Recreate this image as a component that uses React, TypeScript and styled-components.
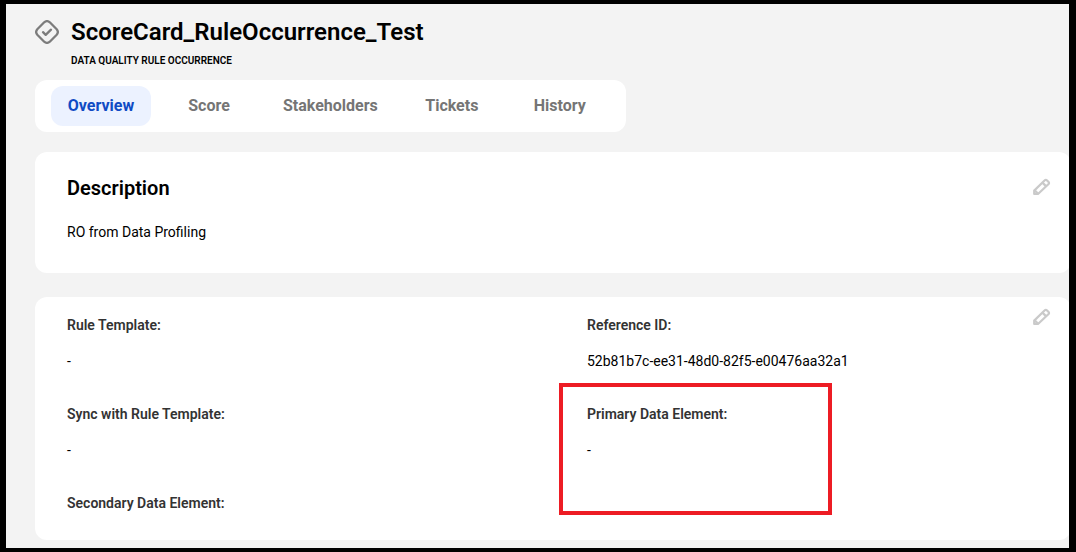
import React from "react";
import styled, { createGlobalStyle } from "styled-components";

const GlobalStyle = createGlobalStyle`
  *, *::before, *::after { box-sizing: border-box; }
  body {
    margin: 0;
    background: #000;
    font-family: Roboto, "Liberation Sans", sans-serif;
    color: #000;
  }
`;

const Page = styled.div`
  min-height: 100vh;
  border: solid #000;
  border-width: 4px 7px 4px 6px;
  padding: 14px 0 8px 29px;
  background: #f3f3f3;
  overflow: hidden;
`;

const Header = styled.header`
  display: flex;
  gap: 12px;
  margin-bottom: 13px;
`;

const AssetIcon = styled.svg`
  flex: none;
  width: 24px;
  height: 24px;
  margin-top: 2px;
`;

const Title = styled.h1`
  margin: 0 0 9px;
  font-size: 24px;
  font-weight: 600;
  line-height: 28px;
`;

const Subtitle = styled.p`
  margin: 0;
  font-size: 10px;
  font-weight: 600;
  line-height: 12px;
  text-transform: uppercase;
`;

const Tabs = styled.nav`
  display: flex;
  gap: 8px;
  width: fit-content;
  margin-bottom: 20px;
  padding: 6px 16px;
  border-radius: 12px;
  background: #fff;
`;

const Tab = styled.button<{ $active?: boolean }>`
  min-width: 100px;
  height: 40px;
  padding: 0 16px;
  border: 0;
  border-radius: 12px;
  background: ${(p) => (p.$active ? "#ecf2ff" : "transparent")};
  color: ${(p) => (p.$active ? "#0f4bc4" : "#757575")};
  font: 700 16px/20px Roboto, "Liberation Sans", sans-serif;
  cursor: pointer;
`;

const Card = styled.section`
  display: flex;
  align-items: flex-start;
  margin: 0 -2px 24px 0;
  border-radius: 12px;
  background: #fff;
  padding-left: 32px;

  &:last-child {
    margin-bottom: 0;
  }
`;

const DescriptionBody = styled.div`
  flex: 1;
  padding: 24px 0 31px;
`;

const Heading = styled.h2`
  margin: 0 0 22px;
  font-size: 20px;
  font-weight: 600;
  line-height: 24px;
`;

const Text = styled.p`
  margin: 0;
  font-size: 14px;
  line-height: 20px;
`;

const Fields = styled.dl`
  flex: 1;
  display: grid;
  grid-template-columns: 1fr 1fr;
  row-gap: 33px;
  margin: 0 -36px 0 0;
  padding: 18px 0 27px;
`;

const Field = styled.div`
  position: relative;
`;

const Label = styled.dt`
  font-size: 14px;
  font-weight: 600;
  line-height: 20px;
  color: #333;
`;

const Value = styled.dd`
  margin: 16px 0 0;
  font-size: 14px;
  line-height: 20px;
`;

const Highlight = styled.span`
  position: absolute;
  top: -21px;
  left: -28px;
  width: 273px;
  height: 132px;
  border: 4px solid #ed1c24;
  pointer-events: none;
`;

const EditButton = styled.button<{ $top: number }>`
  flex: none;
  display: flex;
  width: 18px;
  height: 18px;
  margin: ${(p) => p.$top}px 20px 0 -38px;
  padding: 0;
  border: 0;
  background: transparent;
  cursor: pointer;
  z-index: 1;
`;

const PencilIcon = () => (
  <svg width="18" height="18" viewBox="0 0 18 18" fill="none" stroke="#cacaca" strokeWidth="2.2" strokeLinejoin="round" aria-hidden="true">
    <path d="M1.2 16V12.6L11.8 2.2a1.4 1.4 0 0 1 2 0l1.8 1.8a1.4 1.4 0 0 1 0 2L5 16z" />
    <path d="M9.4 4.6l3.8 3.8M1.7 12.4l3.4 3.4" />
  </svg>
);

const tabs = ["Overview", "Score", "Stakeholders", "Tickets", "History"];

const fields: { label: string; value?: string; highlighted?: boolean }[] = [
  { label: "Rule Template:", value: "-" },
  { label: "Reference ID:", value: "52b81b7c-ee31-48d0-82f5-e00476aa32a1" },
  { label: "Sync with Rule Template:", value: "-" },
  { label: "Primary Data Element:", value: "-", highlighted: true },
  { label: "Secondary Data Element:" },
];

export default function App() {
  const [active, setActive] = React.useState("Overview");
  return (
    <>
      <GlobalStyle />
      <Page>
        <Header>
          <AssetIcon viewBox="0 0 24 24" fill="none" stroke="#7c7c7c" strokeWidth="2.3" strokeLinecap="round" strokeLinejoin="round" aria-hidden="true">
            <path d="M9.2 2.3Q12 0 14.8 2.3L21.7 9.2Q24 12 21.7 14.8L14.8 21.7Q12 24 9.2 21.7L2.3 14.8Q0 12 2.3 9.2Z" />
            <path d="M8 12.2l2.7 2.6L16 9.7" />
          </AssetIcon>
          <div>
            <Title>ScoreCard_RuleOccurrence_Test</Title>
            <Subtitle>Data Quality Rule Occurrence</Subtitle>
          </div>
        </Header>
        <Tabs>
          {tabs.map((name) => (
            <Tab key={name} type="button" $active={name === active} onClick={() => setActive(name)}>
              {name}
            </Tab>
          ))}
        </Tabs>
        <main>
          <Card>
            <DescriptionBody>
              <Heading>Description</Heading>
              <Text>RO from Data Profiling</Text>
            </DescriptionBody>
            <EditButton type="button" aria-label="Edit description" $top={26}>
              <PencilIcon />
            </EditButton>
          </Card>
          <Card>
            <Fields>
              {fields.map((f) => (
                <Field key={f.label}>
                  <Label>{f.label}</Label>
                  {f.value && <Value>{f.value}</Value>}
                  {f.highlighted && <Highlight />}
                </Field>
              ))}
            </Fields>
            <EditButton type="button" aria-label="Edit details" $top={11}>
              <PencilIcon />
            </EditButton>
          </Card>
        </main>
      </Page>
    </>
  );
}
